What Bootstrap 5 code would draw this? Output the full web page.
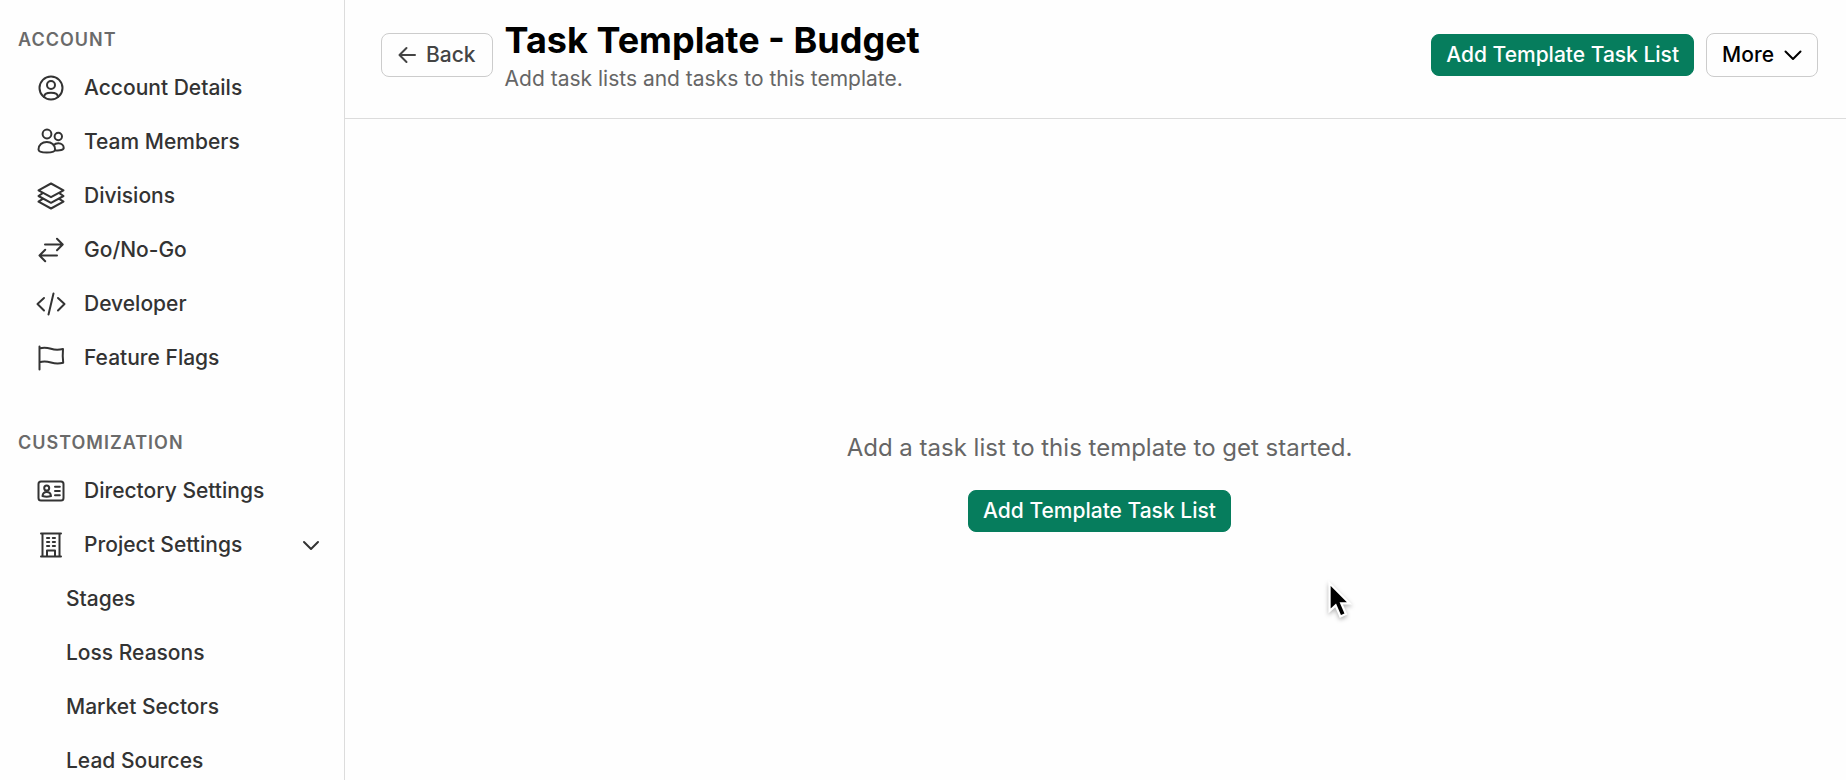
<!DOCTYPE html>
<html lang="en">
<head>
<meta charset="utf-8">
<meta name="viewport" content="width=device-width, initial-scale=1">
<title>Task Template - Budget</title>
<link href="https://cdn.jsdelivr.net/npm/bootstrap@5.3.0/dist/css/bootstrap.min.css" rel="stylesheet">
<style>
  body { font-family: Inter, "Liberation Sans", sans-serif; background: #fefefe; color: #000; font-size: 21px; line-height: 30px; }
  .side-panel { width: 345px; border-right: 1px solid #dcdcdc; padding: 25px 24px 0 18px; }
  .side-title { font-size: 18px; font-weight: 600; line-height: 30px; letter-spacing: 1px; color: #6a6a6a; margin: 0 0 6px; }
  .side-group + .side-group { margin-top: 43px; }
  .side-link { display: flex; align-items: center; height: 54px; padding-left: 18px; gap: 18px; color: #333; font-weight: 500; text-decoration: none; }
  .side-sub { padding-left: 48px; }
  .ico { width: 30px; height: 30px; flex: none; fill: none; stroke: currentColor; stroke-width: 2; stroke-linecap: round; stroke-linejoin: round; }
  .ico-sm { width: 18px; height: 18px; }
  .page-head { border-bottom: 1px solid #dcdcdc; padding: 20px 28px 20px 36px; gap: 12px; }
  .head-side { margin-top: 13px; gap: 12px; }
  .page-title { font-size: 36px; line-height: 40px; font-weight: 700; margin: 0; }
  .page-note { color: #666; margin: 0; line-height: 38px; }
  .btn { --bs-btn-font-size: 21px; --bs-btn-line-height: 28px; --bs-btn-border-radius: 8px; --bs-btn-font-weight: 500; --bs-btn-padding-x: 15px; --bs-btn-padding-y: 7px; }
  .btn-brand { --bs-btn-color: #fff; --bs-btn-bg: #067d5d; --bs-btn-border-color: #067d5d; --bs-btn-hover-bg: #05694e; --bs-btn-hover-color: #fff; --bs-btn-padding-y: 6px; --bs-btn-padding-x: 14px; }
  .btn-plain { --bs-btn-border-color: #ccc; --bs-btn-color: #000; --bs-btn-hover-border-color: #999; gap: 10px; }
  .btn-back { --bs-btn-color: #444; --bs-btn-padding-x: 16px; }
  .empty-state { padding: 62px 0 0 8px; }
  .empty-note { font-size: 24px; line-height: 36px; color: #666; margin: 0 0 24px; }
  .pointer { left: 1325px; top: 580px; width: 29px; height: 42px; filter: drop-shadow(0 2px 2px rgba(0,0,0,.3)); pointer-events: none; }
</style>
</head>
<body>
<div class="d-flex vh-100 overflow-hidden position-relative">
  <nav class="side-panel flex-shrink-0" aria-label="Settings">
    <section class="side-group">
      <h2 class="side-title">ACCOUNT</h2>
      <a class="side-link" href="#"><svg class="ico" viewBox="0 0 30 30"><circle cx="15" cy="15" r="11.500"/><circle cx="15" cy="12" r="4"/><path d="M8 24.100c0-3.400 3-4.400 7-4.400s7 1 7 4.400"/></svg>Account Details</a>
      <a class="side-link" href="#"><svg class="ico" viewBox="0 0 30 30"><circle cx="11" cy="7" r="4.400"/><circle cx="22.300" cy="9.500" r="3.700"/><path d="M2.500 22.500c0-4.500 3.600-7.500 8.300-7.500s8.300 3 8.300 7.500c0 2-3.600 3-8.300 3s-8.300-1-8.300-3zM17.500 18.200c1.300-1.300 3-1.900 4.800-1.900 3.500 0 5.400 2.200 5.400 4.700 0 1.900-3.500 2.800-8.600 2.300"/></svg>Team Members</a>
      <a class="side-link" href="#"><svg class="ico" viewBox="0 0 30 30"><path d="M15 2.500 27.500 9.300 15 16.200 2.500 9.300zM6 12.700 2.500 15 15 21.800 27.500 15 24 12.700M6 18.400 2.500 20.600 15 27.500 27.500 20.600 24 18.400"/></svg>Divisions</a>
      <a class="side-link" href="#"><svg class="ico" viewBox="0 0 30 30"><path d="M9 9.500h17.500M21 3.800l5.700 5.700-5.700 5.700M21 20.500H3.500M9.200 14.800 3.500 20.500l5.700 5.700"/></svg>Go/No-Go</a>
      <a class="side-link" href="#"><svg class="ico" viewBox="0 0 30 30"><path d="M8 9 1.500 15 8 21.500M22 9l6.500 6L22 21.500M17.500 4.500l-5 21"/></svg>Developer</a>
      <a class="side-link" href="#"><svg class="ico" viewBox="0 0 30 30"><path d="M3.500 26.500V3.500M3.500 5.500c4-1.500 7.500-1 11.500.3 4 1.300 8 1.200 12 .2-.4 4.500-.4 9 .2 13.700-4 1.100-8 1-12.200-.2-4-1.200-7.500-1.700-11.500-.2"/></svg>Feature Flags</a>
    </section>
    <section class="side-group">
      <h2 class="side-title">CUSTOMIZATION</h2>
      <a class="side-link" href="#"><svg class="ico" viewBox="0 0 30 30"><rect x="2.500" y="5.500" width="25" height="19" rx="2.500"/><circle cx="10.700" cy="12" r="2.500"/><path d="M6.500 20c.3-3 1.700-4 4.200-4s4 1 4.300 4c-2 .7-6.500.7-8.500 0zM19 10.800h4.800M19 15h4.800M19 19.200h4.800"/></svg>Directory Settings</a>
      <a class="side-link" href="#" aria-expanded="true"><svg class="ico" viewBox="0 0 30 30"><path d="M5 3.500h20M5 26.500h20M6.500 3.500v23M23.500 3.500v23M11 26v-5.500h8V26M11 8h2.200M16.800 8H19M11 12h2.200M16.800 12H19M11 16h2.200M16.800 16H19"/></svg>Project Settings<svg class="ico ico-sm ms-auto" viewBox="0 0 18 18"><path d="m2 6 7 7 7-7"/></svg></a>
      <a class="side-link side-sub" href="#">Stages</a>
      <a class="side-link side-sub" href="#">Loss Reasons</a>
      <a class="side-link side-sub" href="#">Market Sectors</a>
      <a class="side-link side-sub" href="#">Lead Sources</a>
    </section>
  </nav>
  <main class="flex-grow-1 d-flex flex-column">
    <header class="page-head d-flex align-items-start">
      <div class="head-side">
        <button type="button" class="btn btn-plain btn-back d-flex align-items-center"><svg class="ico ico-sm" viewBox="0 0 18 18"><path d="M17 9H2M8.500 2l-7 7 7 7"/></svg>Back</button>
      </div>
      <div class="me-auto">
        <h1 class="page-title">Task Template - Budget</h1>
        <p class="page-note">Add task lists and tasks to this template.</p>
      </div>
      <div class="head-side d-flex align-items-center">
        <button type="button" class="btn btn-brand">Add Template Task List</button>
        <button type="button" class="btn btn-plain d-flex align-items-center">More<svg class="ico ico-sm" viewBox="0 0 18 18"><path d="m1.500 5.500 7.500 7.500 7.500-7.500"/></svg></button>
      </div>
    </header>
    <div class="empty-state flex-grow-1 d-flex flex-column align-items-center justify-content-center">
      <p class="empty-note">Add a task list to this template to get started.</p>
      <button type="button" class="btn btn-brand">Add Template Task List</button>
    </div>
  </main>
  <svg class="pointer position-absolute" viewBox="0 0 26 38" aria-hidden="true"><path d="M4 3v25l5.500-5 4.300 10 5-2.200-4.200-9.600h7.600z" fill="#000" stroke="#fff" stroke-width="2"/></svg>
</div>
<script src="https://cdn.jsdelivr.net/npm/bootstrap@5.3.0/dist/js/bootstrap.bundle.min.js"></script>
</body>
</html>
